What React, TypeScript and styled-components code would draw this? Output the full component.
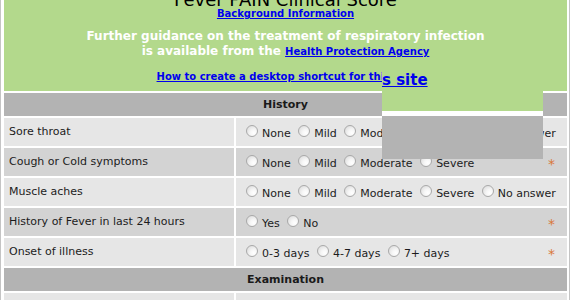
import React from "react";
import styled, { createGlobalStyle } from "styled-components";

const Global = createGlobalStyle`
  html, body { margin: 0; padding: 0; background: #fff; overflow: hidden; }
  body { font-family: "DejaVu Sans", Verdana, sans-serif; font-size: 11px; color: #1c1c1c; }
`;

const Frame = styled.div`
  width: 570px;
  box-sizing: border-box;
  margin-top: -10px;
  border: 1px solid #c4c4c4;
  padding: 0 2px 4px 3px;
`;

const Header = styled.header`
  background: #b3d98c;
  text-align: center;
  padding-bottom: 9px;
  color: #fff;
`;

const Title = styled.h1`
  margin: 0;
  font-size: 18px;
  font-weight: normal;
  line-height: 17px;
  color: #000;
`;

const LinkLine = styled.div<{ $gap?: number }>`
  margin-top: ${(p) => p.$gap ?? 0}px;
  line-height: 11px;
  font-size: 10px;
  font-weight: bold;
`;

const Link = styled.a`
  color: #0000ee;
  font-size: 10px;
  font-weight: bold;
  text-decoration: underline;
`;

const Guidance = styled.p`
  margin: 10px 0 0;
  font-size: 12px;
  font-weight: bold;
  line-height: 15px;
  color: #fff;
`;

const Table = styled.div`
  margin-top: 2px;
  display: grid;
  grid-template-columns: 230px 1fr;
  gap: 2px;
`;

const SectionHead = styled.div`
  grid-column: 1 / -1;
  height: 23px;
  line-height: 23px;
  background: #b3b3b3;
  text-align: center;
  font-weight: bold;
  color: #1a1a1a;
`;

const LabelCell = styled.div<{ $shade: boolean }>`
  height: 28px;
  line-height: 28px;
  padding-left: 5px;
  background: ${(p) => (p.$shade ? "#d3d3d3" : "#e6e6e6")};
  white-space: nowrap;
`;

const ChoiceCell = styled.div<{ $shade: boolean }>`
  height: 28px;
  box-sizing: border-box;
  padding: 4px 6px 0 6px;
  line-height: 24px;
  background: ${(p) => (p.$shade ? "#d3d3d3" : "#e6e6e6")};
  display: flex;
  white-space: nowrap;
`;

const Options = styled.div`
  flex: 1;
`;

const Option = styled.label`
  color: #1c1c1c;
`;

const Radio = styled.input`
  appearance: none;
  -webkit-appearance: none;
  display: inline-block;
  box-sizing: border-box;
  width: 12px;
  height: 12px;
  margin: 0 4px;
  vertical-align: baseline;
  border-radius: 50%;
  border: 1px solid #a9a9a9;
  background: radial-gradient(circle at 68% 70%, #ffffff 0%, #f6f6f6 35%, #d6d6d6 100%);
`;

const Required = styled.span`
  font-size: 14px;
  color: #d9773a;
  margin-right: 6px;
`;

const Glitch = styled.div`
  position: absolute;
  left: 382px;
  top: 70px;
  width: 161px;
  display: flex;
  flex-direction: column;
`;

const GlitchGreen = styled.div`
  height: 41px;
  box-sizing: border-box;
  padding-top: 3px;
  background: #b3d98c;
  line-height: 14px;
`;

const GlitchLink = styled.a`
  color: #0000ee;
  font-size: 15px;
  font-weight: bold;
  text-decoration: underline;
`;

const GlitchWhite = styled.div`
  height: 5px;
  background: #fff;
`;

const GlitchGray = styled.div`
  height: 43px;
  background: #b3b3b3;
`;

type Row = { label: string; options: string[]; required: boolean };

const history: Row[] = [
  { label: "Sore throat", options: ["None", "Mild", "Moderate", "Severe", "No answer"], required: false },
  { label: "Cough or Cold symptoms", options: ["None", "Mild", "Moderate", "Severe"], required: true },
  { label: "Muscle aches", options: ["None", "Mild", "Moderate", "Severe", "No answer"], required: false },
  { label: "History of Fever in last 24 hours", options: ["Yes", "No"], required: true },
  { label: "Onset of illness", options: ["0-3 days", "4-7 days", "7+ days"], required: true },
];

const examination: Row[] = [
  { label: "Purulence (pus on tonsils)", options: ["Yes", "No"], required: true },
  { label: "Severely inflamed tonsils", options: ["Yes", "No"], required: true },
];

function Rows({ rows, prefix }: { rows: Row[]; prefix: string }) {
  return (
    <>
      {rows.map((r, i) => {
        const shade = i % 2 === 1;
        return (
          <React.Fragment key={r.label}>
            <LabelCell $shade={shade}>{r.label}</LabelCell>
            <ChoiceCell $shade={shade}>
              <Options>
                {r.options.map((o, j) => (
                  <React.Fragment key={o}>
                    {j > 0 ? " " : null}
                    <Option>
                      <Radio type="radio" name={`${prefix}-${i}`} />
                      {o}
                    </Option>
                  </React.Fragment>
                ))}
              </Options>
              {r.required ? <Required>*</Required> : null}
            </ChoiceCell>
          </React.Fragment>
        );
      })}
    </>
  );
}

export default function App() {
  return (
    <>
      <Global />
      <Frame>
        <Header>
          <Title>Fever PAIN Clinical Score</Title>
          <LinkLine>
            <Link href="#background">Background Information</Link>
          </LinkLine>
          <Guidance>
            Further guidance on the treatment of respiratory infection
            <br />
            is available from the <Link href="#hpa">Health Protection Agency</Link>
          </Guidance>
          <LinkLine $gap={12}>
            <Link href="#shortcut">How to create a desktop shortcut for this site</Link>
          </LinkLine>
        </Header>
        <Table>
          <SectionHead>History</SectionHead>
          <Rows rows={history} prefix="h" />
          <SectionHead>Examination</SectionHead>
          <Rows rows={examination} prefix="e" />
        </Table>
      </Frame>
      <Glitch aria-hidden="true">
        <GlitchGreen>
          <GlitchLink>s site</GlitchLink>
        </GlitchGreen>
        <GlitchWhite />
        <GlitchGray />
      </Glitch>
    </>
  );
}
